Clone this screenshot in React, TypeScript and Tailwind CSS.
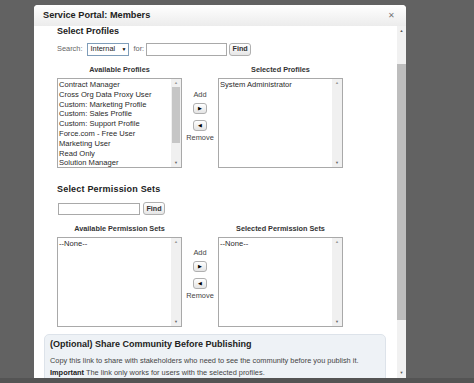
import React from "react";

const font = { fontFamily: '"Liberation Sans", Arial, sans-serif' };

function ListBox({ items, thumb }: { items: string[]; thumb?: boolean }) {
  return (
    <div className="flex h-full w-[125px] border border-[#a9a9a9] bg-white">
      <div className="flex-1 pl-[1px] pt-[1px]">
        {items.map((t) => (
          <div key={t} className="h-[9.8px] whitespace-nowrap text-[7.6px] leading-[9.8px] text-[#2a2a2a]">
            {t}
          </div>
        ))}
      </div>
      <div className="flex w-[10px] flex-col bg-[#f0f0f0]">
        <div className="flex h-[8px] items-center justify-center text-[4px] leading-none text-[#999]">▲</div>
        {thumb ? <div className="mx-[1px] h-[56px] bg-[#c6c6c6]" /> : null}
        <div className="flex-1" />
        <div className="flex h-[8px] items-center justify-center text-[4px] leading-none text-[#666]">▼</div>
      </div>
    </div>
  );
}

function ArrowBtn({ dir }: { dir: "r" | "l" }) {
  return (
    <div className="flex h-[11px] w-[14px] items-center justify-center rounded-[3px] border border-[#b0b0b0] bg-gradient-to-b from-white to-[#e4e4e4] text-[5px] leading-none text-black">
      {dir === "r" ? "▶" : "◀"}
    </div>
  );
}

function Middle({ top }: { top: number }) {
  return (
    <div className="flex w-[36px] flex-col items-center" style={{ paddingTop: top }}>
      <div className="text-[7.4px] leading-[10px] text-[#444]">Add</div>
      <div className="mt-[3px]">
        <ArrowBtn dir="r" />
      </div>
      <div className="mt-[6px]">
        <ArrowBtn dir="l" />
      </div>
      <div className="mt-[2px] text-[7.4px] leading-[10px] text-[#444]">Remove</div>
    </div>
  );
}

function FindBtn() {
  return (
    <div className="flex h-[13px] w-[22px] items-center justify-center rounded-[3px] border border-[#b0b0b0] bg-gradient-to-b from-white to-[#e6e6e6] text-[7.2px] font-bold leading-none text-[#333]">
      Find
    </div>
  );
}

export default function App() {
  const profiles = [
    "Contract Manager",
    "Cross Org Data Proxy User",
    "Custom: Marketing Profile",
    "Custom: Sales Profile",
    "Custom: Support Profile",
    "Force.com - Free User",
    "Marketing User",
    "Read Only",
    "Solution Manager",
  ];
  return (
    <div className="flex h-[383px] w-[474px] flex-col overflow-hidden bg-[#626262]" style={font}>
      <div className="flex h-[378px] pl-[34px] pt-[5px]">
        <div className="flex h-[373px] w-[372px] flex-col overflow-hidden rounded-t-[4px] bg-white">
          {/* header */}
          <div className="flex h-[21px] items-center justify-between bg-gradient-to-b from-white to-[#ececec] pl-[9px] pr-[11px]">
            <div className="text-[9.2px] font-bold leading-none text-[#222]">Service Portal: Members</div>
            <div className="text-[8px] leading-none text-[#777]">✕</div>
          </div>
          {/* body */}
          <div className="flex flex-1 overflow-hidden">
            <div className="flex-1 overflow-hidden pl-[10px] pr-[11px]">
              <div className="pl-[13px]">
                <div className="h-[10px] text-[9px] font-bold leading-[10px] text-[#222]">Select Profiles</div>
                <div className="mt-[6px] flex h-[14px] items-center">
                  <span className="text-[7.4px] text-[#666]">Search:</span>
                  <div className="ml-[5px] flex h-[13px] w-[42px] items-center justify-between border border-[#7f9db9] bg-white px-[2px]">
                    <span className="text-[7.4px] leading-none text-[#222]">Internal</span>
                    <span className="text-[5px] leading-none text-black">▼</span>
                  </div>
                  <span className="ml-[4px] text-[7.4px] text-[#666]">for:</span>
                  <div className="ml-[2px] h-[13px] w-[81px] border border-[#a9a9a9] bg-white" />
                  <div className="ml-[2px]">
                    <FindBtn />
                  </div>
                </div>
                <div className="mt-[9px] flex">
                  <div className="w-[125px] text-center text-[7.3px] font-bold leading-[10px] text-[#333]">Available Profiles</div>
                  <div className="w-[36px]" />
                  <div className="w-[125px] text-center text-[7.3px] font-bold leading-[10px] text-[#333]">Selected Profiles</div>
                </div>
                <div className="mt-[3px] flex h-[90px]">
                  <ListBox items={profiles} thumb />
                  <Middle top={12} />
                  <ListBox items={["System Administrator"]} />
                </div>

                <div className="mt-[16px] h-[10px] text-[9px] font-bold leading-[10px] tracking-[0.2px] text-[#222]">Select Permission Sets</div>
                <div className="mt-[8px] flex h-[13px] items-center">
                  <div className="ml-[1px] h-[12px] w-[82px] border border-[#a9a9a9] bg-white" />
                  <div className="ml-[3px]">
                    <FindBtn />
                  </div>
                </div>
                <div className="mt-[9px] flex">
                  <div className="w-[125px] text-center text-[7.3px] font-bold leading-[10px] text-[#333]">Available Permission Sets</div>
                  <div className="w-[36px]" />
                  <div className="w-[125px] text-center text-[7.3px] font-bold leading-[10px] text-[#333]">Selected Permission Sets</div>
                </div>
                <div className="mt-[3px] flex h-[90px]">
                  <ListBox items={["--None--"]} />
                  <Middle top={11} />
                  <ListBox items={["--None--"]} />
                </div>
              </div>
              <div className="mt-[7px] h-[60px] rounded-t-[5px] border border-[#dde3ea] bg-[#eef2f6] pl-[5px] pt-[4px]">
                <div className="text-[9px] font-bold leading-[10px] text-[#222]">(Optional) Share Community Before Publishing</div>
                <div className="mt-[7px] whitespace-nowrap text-[7.4px] leading-[10px] text-[#444]">
                  Copy this link to share with stakeholders who need to see the community before you publish it.
                </div>
                <div className="mt-[2px] whitespace-nowrap text-[7.4px] leading-[10px] text-[#444]">
                  <span className="font-bold text-[#222]">Important</span> The link only works for users with the selected profiles.
                </div>
              </div>
            </div>
            {/* dialog scrollbar */}
            <div className="flex w-[9px] flex-col bg-[#f1f1f1]">
              <div className="flex h-[10px] items-center justify-center text-[4px] leading-none text-[#555]">▲</div>
              <div className="h-[28px]" />
              <div className="h-[256px] bg-[#bdbdbd]" />
              <div className="flex-1" />
              <div className="flex h-[10px] items-center justify-center text-[4px] leading-none text-[#555]">▼</div>
            </div>
          </div>
        </div>
      </div>
      <div className="h-[5px] bg-[#545454]" />
    </div>
  );
}
